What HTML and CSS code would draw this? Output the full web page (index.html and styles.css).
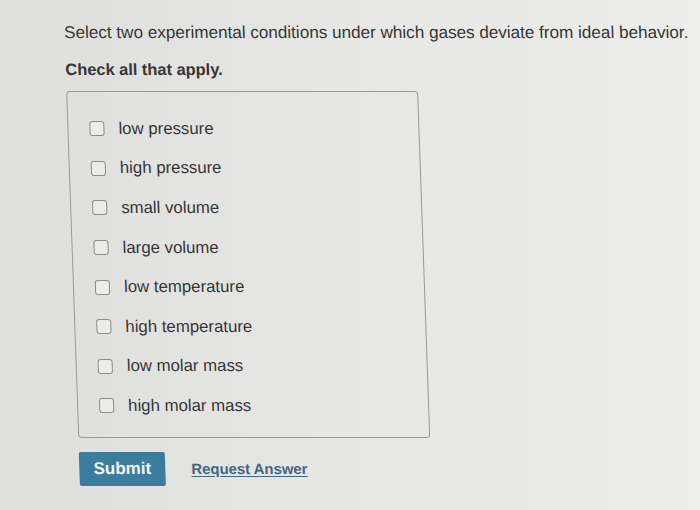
FILE: index.html
```html
<!DOCTYPE html>
<html lang="en">
<head>
<meta charset="utf-8">
<title>Question</title>
<link rel="stylesheet" href="styles.css">
</head>
<body>
<main class="question">
  <p class="prompt">Select two experimental conditions under which gases deviate from ideal behavior.</p>
  <p class="instruction">Check all that apply.</p>
  <div class="options">
    <label class="option"><span class="box"></span><span class="label">low pressure</span></label>
    <label class="option"><span class="box"></span><span class="label">high pressure</span></label>
    <label class="option"><span class="box"></span><span class="label">small volume</span></label>
    <label class="option"><span class="box"></span><span class="label">large volume</span></label>
    <label class="option"><span class="box"></span><span class="label">low temperature</span></label>
    <label class="option"><span class="box"></span><span class="label">high temperature</span></label>
    <label class="option"><span class="box"></span><span class="label">low molar mass</span></label>
    <label class="option"><span class="box"></span><span class="label">high molar mass</span></label>
  </div>
  <div class="actions">
    <button class="submit" type="button">Submit</button>
    <a class="request" href="#">Request Answer</a>
  </div>
</main>
</body>
</html>
```

FILE: styles.css
```css
html, body {
  margin: 0;
  height: 100%;
}
body {
  background: linear-gradient(90deg, #dededc 0%, #e6e6e4 45%, #ededeb 100%);
  font-family: "Liberation Sans", Arial, sans-serif;
  color: #363636;
  overflow: hidden;
}
.question {
  padding: 23px 0 0 64px;
  transform: skewX(2deg);
  transform-origin: 0 30px;
}
.prompt {
  margin: 0;
  font-size: 17.1px;
  line-height: 20px;
}
.instruction {
  margin: 16px 0 0;
  font-size: 16.4px;
  font-weight: bold;
  line-height: 20px;
}
.options {
  margin-top: 12px;
  width: 350px;
  border: 1px solid #9a9a98;
  border-radius: 4px;
  padding: 17px 0 11px;
  display: flex;
  flex-direction: column;
}
.option {
  display: flex;
  align-items: center;
  height: 39.6px;
  padding-left: 21px;
  font-size: 16.8px;
}
.box {
  width: 13px;
  height: 13px;
  border: 1.5px solid #8c8c8a;
  border-radius: 3px;
  background: #ececea;
  margin-right: 14px;
  flex: none;
}
.actions {
  margin-top: 14px;
  display: flex;
  align-items: center;
  gap: 26px;
}
.submit {
  width: 86px;
  height: 34px;
  border: none;
  border-radius: 2px;
  background: #3c7c9c;
  color: #f4f6f7;
  font-family: "Liberation Sans", Arial, sans-serif;
  font-size: 17px;
  font-weight: bold;
  padding: 0;
}
.request {
  color: #3f6786;
  font-size: 14.9px;
  font-weight: bold;
  text-decoration: underline;
  text-underline-offset: 2px;
}
```
